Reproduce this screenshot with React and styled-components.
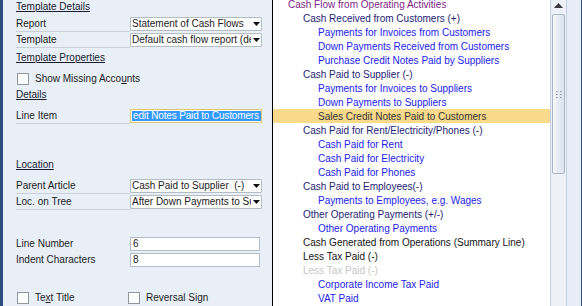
import React from "react";
import styled, { createGlobalStyle } from "styled-components";

const GlobalStyle = createGlobalStyle`
  html, body { margin: 0; padding: 0; background: #e9eff7; }
  body { font-family: "Liberation Sans", Arial, sans-serif; font-size: 10px; }
  * { box-sizing: border-box; }
`;

const Window = styled.div`
  width: 582px;
  height: 306px;
  display: flex;
  overflow: hidden;
  border-left: 3px solid #2c4d80;
  border-right: 1px solid #2c4d80;
  background: #e9eff7;
  color: #1c1c1c;
`;

const LeftPanel = styled.div`
  width: 269px;
  flex: none;
  display: flex;
  flex-direction: column;
  padding-left: 13px;
  padding-right: 10px;
`;

const Spacer = styled.div`
  height: ${(p) => p.$h}px;
  flex: none;
`;

const SectionHeader = styled.div`
  height: 14px;
  line-height: 14px;
  text-decoration: underline;
  color: #1a1a30;
  flex: none;
`;

const FieldRow = styled.div`
  height: 16px;
  display: flex;
  align-items: center;
  flex: none;
`;

const Label = styled.div`
  width: 114px;
  height: 100%;
  line-height: 15px;
  border-bottom: ${(p) => (p.$line ? "1px solid #c9d0da" : "none")};
  flex: none;
  white-space: nowrap;
`;

const ComboBox = styled.div`
  width: 132px;
  height: 14px;
  background: #fff;
  border: 1px solid #b3bbc6;
  border-radius: 1px;
  display: flex;
  align-items: center;
  padding-left: 1px;
  overflow: hidden;
`;

const ComboText = styled.span`
  flex: 1;
  overflow: hidden;
  white-space: nowrap;
  line-height: 12px;
`;

const ComboArrow = styled.span`
  width: 10px;
  flex: none;
  display: flex;
  justify-content: center;
  align-items: center;
`;

const TextInput = styled.div`
  width: ${(p) => p.$w || 130}px;
  height: 14px;
  background: #fff;
  border: 1px solid ${(p) => (p.$focused ? "#e5c46e" : "#b3bbc6")};
  display: flex;
  align-items: center;
  padding-left: ${(p) => (p.$focused ? 1 : 2)}px;
  overflow: hidden;
  white-space: nowrap;
  line-height: 12px;
`;

const Selection = styled.span`
  background: #3399ff;
  color: #fff;
  height: 10px;
  line-height: 10px;
  display: block;
  width: 100%;
  padding-left: 1px;
  letter-spacing: -0.15px;
  overflow: hidden;
`;

const CheckRow = styled.div`
  height: 15px;
  display: flex;
  align-items: center;
  flex: none;
`;

const CheckItem = styled.label`
  display: flex;
  align-items: center;
  width: ${(p) => p.$w || "auto"};
`;

const Box = styled.span`
  width: 12px;
  height: 12px;
  margin-left: 1px;
  background: #fff;
  border: 1px solid #8e959e;
  flex: none;
  margin-right: 6px;
`;

const Mn = styled.span`
  text-decoration: underline;
`;

const TreePanel = styled.div`
  flex: 1;
  display: flex;
  border-left: 1px solid #000;
  background: #fff;
`;

const TreeList = styled.div`
  flex: 1;
  display: flex;
  flex-direction: column;
  margin-top: -3px;
  overflow: hidden;
`;

const levelColors = ["#7d1f86", "#1e1e74", "#2222ee"];

const TreeRow = styled.div`
  height: 14px;
  line-height: 15px;
  flex: none;
  white-space: nowrap;
  padding-left: ${(p) => 15 + p.$level * 15}px;
  background: ${(p) => (p.$selected ? "#f9d98a" : "transparent")};
  color: ${(p) =>
    p.$selected
      ? "#333"
      : p.$tone === "black"
      ? "#141414"
      : p.$tone === "grey"
      ? "#c6c6c6"
      : levelColors[p.$level]};
`;

const Scrollbar = styled.div`
  width: 16px;
  flex: none;
  background: #eef2f8;
  border-left: 1px solid #c3d1e3;
  display: flex;
  flex-direction: column;
  align-items: center;
`;

const ScrollButton = styled.div`
  height: 13px;
  width: 100%;
  display: flex;
  justify-content: center;
  align-items: center;
  padding-bottom: 2px;
`;

const Thumb = styled.div`
  width: 13px;
  height: 160px;
  margin-top: 1px;
  border: 1px solid #a9b6c7;
  border-radius: 2px;
  background: linear-gradient(to right, #f6f8fb, #e3e9f1 60%, #dbe3ed);
  display: flex;
  justify-content: center;
  align-items: center;
`;

const SideStrip = styled.div`
  width: 15px;
  flex: none;
  background: #e6edf6;
  border-left: 1px solid #c4d2e5;
`;

const Arrow = () => (
  <svg width="7" height="4" viewBox="0 0 7 4">
    <path d="M0 0 H7 L3.5 4 Z" fill="#111" />
  </svg>
);

const Combo = ({ children }) => (
  <ComboBox>
    <ComboText>{children}</ComboText>
    <ComboArrow>
      <Arrow />
    </ComboArrow>
  </ComboBox>
);

const tree = [
  ["Cash Flow from Operating Activities", 0],
  ["Cash Received from Customers (+)", 1],
  ["Payments for Invoices from Customers", 2],
  ["Down Payments Received from Customers", 2],
  ["Purchase Credit Notes Paid by Suppliers", 2],
  ["Cash Paid to Supplier  (-)", 1],
  ["Payments for Invoices to Suppliers", 2],
  ["Down Payments to Suppliers", 2],
  ["Sales Credit Notes Paid to Customers", 2, "selected"],
  ["Cash Paid for Rent/Electricity/Phones (-)", 1],
  ["Cash Paid for Rent", 2],
  ["Cash Paid for Electricity", 2],
  ["Cash Paid for Phones", 2],
  ["Cash Paid to Employees(-)", 1],
  ["Payments to Employees, e.g. Wages", 2],
  ["Other Operating Payments (+/-)", 1],
  ["Other Operating Payments", 2],
  ["Cash Generated from Operations (Summary Line)", 1, "black"],
  ["Less Tax Paid (-)", 1, "black"],
  ["Less Tax Paid (-)", 1, "grey"],
  ["Corporate Income Tax Paid", 2],
  ["VAT Paid", 2],
];

export default function App() {
  return (
    <>
      <GlobalStyle />
      <Window>
        <LeftPanel>
          <SectionHeader>Template Details</SectionHeader>
          <Spacer $h={2} />
          <FieldRow>
            <Label $line>Report</Label>
            <Combo>Statement of Cash Flows</Combo>
          </FieldRow>
          <FieldRow>
            <Label $line>Template</Label>
            <Combo>Default cash flow report (default)</Combo>
          </FieldRow>
          <Spacer $h={3} />
          <SectionHeader>Template Properties</SectionHeader>
          <Spacer $h={6} />
          <CheckRow>
            <CheckItem>
              <Box />
              <span>
                Show Missing Acco<Mn>u</Mn>nts
              </span>
            </CheckItem>
          </CheckRow>
          <Spacer $h={2} />
          <SectionHeader>Details</SectionHeader>
          <Spacer $h={6} />
          <FieldRow>
            <Label $line>Line Item</Label>
            <TextInput $focused $w={132}>
              <Selection>edit Notes Paid to Customers</Selection>
            </TextInput>
          </FieldRow>
          <Spacer $h={34} />
          <SectionHeader>Location</SectionHeader>
          <Spacer $h={6} />
          <FieldRow>
            <Label $line>Parent Article</Label>
            <Combo>Cash Paid to Supplier&nbsp; (-)</Combo>
          </FieldRow>
          <FieldRow>
            <Label $line>Loc. on Tree</Label>
            <Combo>After Down Payments to Suppliers</Combo>
          </FieldRow>
          <Spacer $h={26} />
          <FieldRow>
            <Label>Line Number</Label>
            <TextInput>6</TextInput>
          </FieldRow>
          <FieldRow>
            <Label>Indent Characters</Label>
            <TextInput>8</TextInput>
          </FieldRow>
          <Spacer $h={22} />
          <CheckRow>
            <CheckItem $w="111px">
              <Box />
              <span>
                Te<Mn>x</Mn>t Title
              </span>
            </CheckItem>
            <CheckItem>
              <Box />
              <span>Reversal Sign</span>
            </CheckItem>
          </CheckRow>
        </LeftPanel>
        <TreePanel>
          <TreeList>
            {tree.map(([text, level, flag], i) => (
              <TreeRow
                key={i}
                $level={level}
                $selected={flag === "selected"}
                $tone={flag}
              >
                {text}
              </TreeRow>
            ))}
          </TreeList>
          <Scrollbar>
            <ScrollButton>
              <svg width="9" height="5" viewBox="0 0 9 5">
                <path d="M0 5 L4.5 0 L9 5 Z" fill="#3c3c3c" />
              </svg>
            </ScrollButton>
            <Thumb>
              <svg width="6" height="7" viewBox="0 0 6 7">
                {[0, 3, 6].map((y) =>
                  [0, 4].map((x) => (
                    <rect key={`${x}-${y}`} x={x} y={y} width="1.5" height="1" fill="#8d9bb0" />
                  ))
                )}
              </svg>
            </Thumb>
          </Scrollbar>
          <SideStrip />
        </TreePanel>
      </Window>
    </>
  );
}
